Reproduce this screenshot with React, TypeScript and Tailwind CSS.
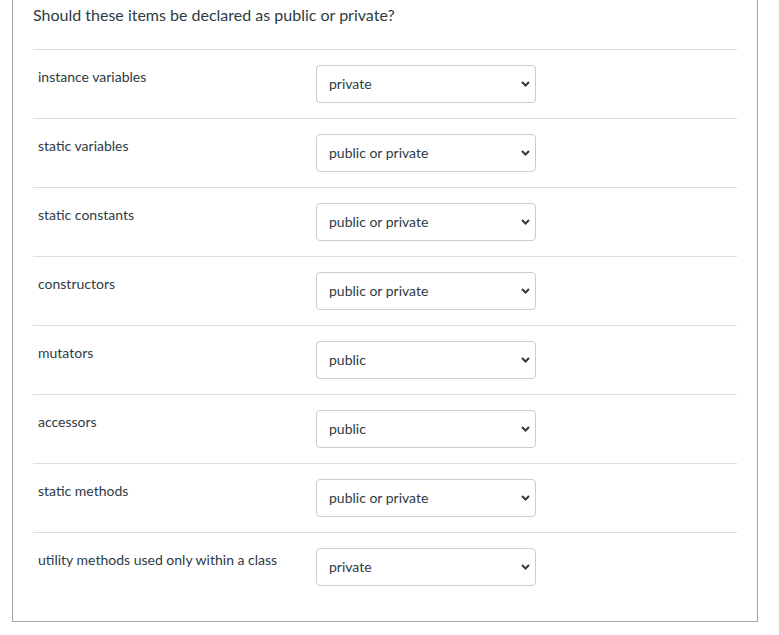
const rows: [string, string][] = [
  ["instance variables", "private"],
  ["static variables", "public or private"],
  ["static constants", "public or private"],
  ["constructors", "public or private"],
  ["mutators", "public"],
  ["accessors", "public"],
  ["static methods", "public or private"],
  ["utility methods used only within a class", "private"],
];

const options = ["[ Choose ]", "public", "private", "public or private"];

function Chevron() {
  return (
    <svg
      className="pointer-events-none absolute right-[6px] top-1/2 -translate-y-1/2"
      width="9"
      height="6"
      viewBox="0 0 9 6"
    >
      <path d="M1 1l3.5 3.5L8 1" fill="none" stroke="#2d3b45" strokeWidth="2" />
    </svg>
  );
}

export default function App() {
  return (
    <div className="min-h-screen bg-white font-['Lato','Liberation_Sans',sans-serif] text-[#2d3b45]">
      <div className="ml-[12px] w-[746px] h-[622px] border-x border-b border-[#a5a5a5] px-[20px]">
        <div className="pt-[4px] pb-[23px] text-[16px] leading-[22px]">
          Should these items be declared as public or private?
        </div>
        {rows.map(([label, value], i) => (
          <div
            key={label}
            className={
              "flex border-t border-[#dcdcdc] " +
              (i === rows.length - 1 ? "pt-[15px]" : "h-[69px] pt-[15px]")
            }
          >
            <div className="w-[283px] pl-[5px] pt-[2px] text-[14px] leading-[20px]">{label}</div>
            <div className="relative w-[220px] h-[38px]">
              <select
                defaultValue={value}
                className="w-full h-full appearance-none rounded-[4px] border border-[#c7cdd1] bg-white pl-[12px] pb-[2px] text-[14px] text-[#2d3b45] outline-none"
              >
                {options.map((o) => (
                  <option key={o} value={o}>
                    {o}
                  </option>
                ))}
              </select>
              <Chevron />
            </div>
          </div>
        ))}
      </div>
    </div>
  );
}
